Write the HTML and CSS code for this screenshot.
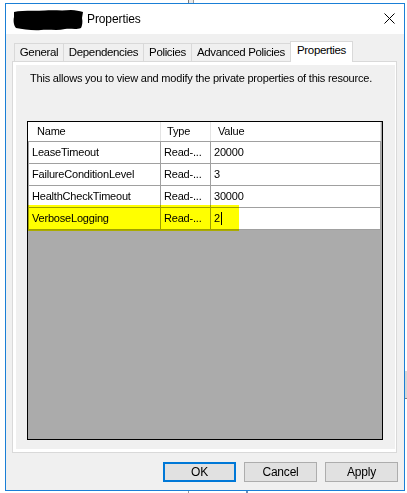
FILE: index.html
```html
<!DOCTYPE html>
<html lang="en">
<head>
  <meta charset="UTF-8" />
  <title>Properties</title>
  <link rel="stylesheet" href="styles.css">
</head>
<body>
  <div class="desk-mark mark-top"></div>
  <div class="desk-mark mark-side"></div>
  <div class="desk-mark mark-bottom"></div>

  <div class="window">
    <div class="titlebar">
      <svg class="redact" width="70" height="22" viewBox="0 0 70 22">
        <path d="M1 3 C8 1 20 2 32 1.5 C42 1 50 2 58 1 C63 1 66 2 70 3 L69 9 C70 13 69 17 68 19 C62 21 58 19 52 20 C44 22 36 20 28 21 C20 22 10 20 3 19 C1 17 0 12 1 8 Z" fill="#000"/>
      </svg>
      <span class="title">Properties</span>
      <svg class="close" width="11" height="11" viewBox="0 0 11 11">
        <path d="M0.5 0.5 L10.5 10.5 M10.5 0.5 L0.5 10.5" stroke="#000" stroke-width="1" fill="none"/>
      </svg>
    </div>

    <div class="dialog">
      <div class="tabs">
        <div class="tab tab-general">General</div>
        <div class="tab tab-deps">Dependencies</div>
        <div class="tab tab-policies">Policies</div>
        <div class="tab tab-advanced">Advanced Policies</div>
        <div class="tab tab-props active">Properties</div>
      </div>

      <div class="panel">
        <div class="page">
          <p class="intro">This allows you to view and modify the private properties of this resource.</p>

          <div class="grid">
            <div class="row head">
              <div class="cell name">Name</div>
              <div class="cell type">Type</div>
              <div class="cell value">Value</div>
            </div>
            <div class="row">
              <div class="cell name">LeaseTimeout</div>
              <div class="cell type">Read-...</div>
              <div class="cell value">20000</div>
            </div>
            <div class="row">
              <div class="cell name">FailureConditionLevel</div>
              <div class="cell type">Read-...</div>
              <div class="cell value">3</div>
            </div>
            <div class="row">
              <div class="cell name">HealthCheckTimeout</div>
              <div class="cell type">Read-...</div>
              <div class="cell value">30000</div>
            </div>
            <div class="row">
              <div class="cell name">VerboseLogging</div>
              <div class="cell type">Read-...</div>
              <div class="cell value">2<span class="caret"></span></div>
            </div>

            <div class="highlight"></div>
          </div>
        </div>
      </div>

      <div class="buttons">
        <button class="btn default">OK</button>
        <button class="btn">Cancel</button>
        <button class="btn">Apply</button>
      </div>
    </div>
  </div>
</body>
</html>
```

FILE: styles.css
```css
* {
  box-sizing: border-box;
}

body {
  margin: 0;
  padding: 3px 0 0 5px;
  width: 407px;
  height: 493px;
  overflow: hidden;
  position: relative;
  background: #fff;
  font-family: "Liberation Sans", Arial, sans-serif;
  font-size: 11px;
  color: #000;
}

/* bits of the desktop peeking out behind the dialog */
.desk-mark {
  position: absolute;
}

.mark-top {
  left: 188px;
  top: 0;
  width: 6px;
  height: 3px;
  border-left: 1px solid #7a7a7a;
  border-right: 1px solid #9a9a9a;
  background: #e8e8e8;
}

.mark-side {
  left: 405px;
  top: 371px;
  width: 2px;
  height: 28px;
  background: #d6d6d6;
  border-bottom: 1px solid #808080;
}

.mark-bottom {
  left: 188px;
  top: 491px;
  width: 60px;
  height: 2px;
  border-left: 1px solid #9a9a9a;
  border-right: 2px solid #6f8fb5;
}

.window {
  width: 400px;
  height: 488px;
  border: 1px solid #1a7fd6;
  background: #f0f0f0;
  position: relative;
  z-index: 1;
}

.titlebar {
  height: 30px;
  background: #fff;
  display: flex;
  align-items: center;
  padding-left: 7px;
}

.redact {
  margin-right: 4px;
  margin-top: 2px;
}

.title {
  font-size: 12px;
  letter-spacing: -0.1px;
}

.close {
  margin-left: auto;
  margin-right: 9px;
  margin-top: -1px;
}

.dialog {
  padding-top: 7px;
}

.tabs {
  display: flex;
  align-items: flex-end;
  height: 20px;
  padding-left: 8px;
}

.tab {
  height: 18px;
  border: 1px solid #d9d9d9;
  border-bottom: none;
  margin-left: -1px;
  background: #f0f0f0;
  font-size: 11.5px;
  letter-spacing: -0.35px;
  text-align: center;
  line-height: 17px;
}

.tab-general {
  margin-left: 0;
  width: 50px;
}

.tab-deps {
  width: 81px;
}

.tab-policies {
  width: 49px;
}

.tab-advanced {
  width: 100px;
}

.tab-props {
  width: 63px;
}

.tab.active {
  height: 21px;
  margin-bottom: -1px;
  background: #fff;
  position: relative;
  z-index: 1;
  line-height: 17px;
}

.panel {
  margin-left: 6px;
  width: 385px;
  height: 392px;
  border: 1px solid #d9d9d9;
  background: #fff;
  padding: 3px 1px 3px 3px;
}

.page {
  height: 100%;
  background: #f0f0f0;
  padding: 6px 0 0 14px;
}

.intro {
  margin: 0;
  line-height: 14px;
  letter-spacing: -0.2px;
}

.grid {
  position: relative;
  margin: 36px 0 0 -3px;
  width: 356px;
  height: 319px;
  border: 1px solid #000;
  background: #ababab;
}

.row {
  display: flex;
  width: 353px;
  height: 22px;
  background: #fff;
  border-left: 1px solid #a0a0a0;
  border-bottom: 1px solid #a0a0a0;
}

.cell {
  border-right: 1px solid #a0a0a0;
  padding-left: 3px;
  line-height: 21px;
  white-space: nowrap;
  overflow: hidden;
  letter-spacing: -0.2px;
}

.name {
  width: 132px;
}

.type {
  width: 50px;
}

.value {
  width: 170px;
}

.row.head {
  height: 20px;
  border-left: none;
}

.head .cell {
  line-height: 19px;
  border-right-color: #e3e3e3;
}

.head .name {
  width: 133px;
  padding-left: 9px;
}

.head .type {
  padding-left: 6px;
}

.head .value {
  padding-left: 7px;
}

.caret {
  display: inline-block;
  width: 1px;
  height: 13px;
  background: #000;
  margin-left: 1px;
  vertical-align: -3px;
}

.highlight {
  position: absolute;
  left: 0;
  top: 83px;
  width: 211px;
  height: 26px;
  background: #ffff00;
  mix-blend-mode: multiply;
}

.buttons {
  display: flex;
  justify-content: flex-end;
  gap: 8px;
  margin-top: 9px;
  padding-right: 6px;
}

.btn {
  width: 73px;
  height: 20px;
  padding: 0;
  border: 1px solid #adadad;
  background: #e1e1e1;
  font-family: "Liberation Sans", Arial, sans-serif;
  font-size: 12px;
  letter-spacing: -0.2px;
  color: #000;
}

.btn.default {
  border: 2px solid #0078d7;
}
```
